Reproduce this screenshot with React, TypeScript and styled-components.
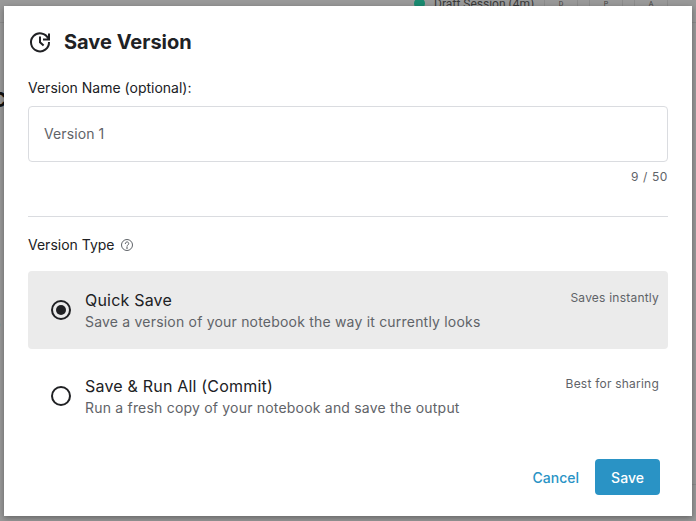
import React from "react";
import styled, { createGlobalStyle } from "styled-components";

const Global = createGlobalStyle`
  html, body { margin: 0; padding: 0; width: 696px; height: 521px; overflow: hidden; background: #999; }
  * { box-sizing: border-box; }
  body { font-family: Inter, "Liberation Sans", sans-serif; -webkit-font-smoothing: antialiased; }
`;

const Page = styled.div`
  position: relative;
  width: 696px;
  height: 521px;
  background: #999;
  overflow: hidden;
`;

const TopBar = styled.div`
  position: absolute;
  left: 0;
  right: 0;
  top: -6px;
  height: 29px;
  border-bottom: 1px solid #8c8c8c;
  display: flex;
  align-items: stretch;
  padding-left: 414px;
  color: #3a3a3a;
  font: 12px Roboto, sans-serif;
`;

const StatusDot = styled.span`
  width: 11px;
  height: 11px;
  border-radius: 50%;
  background: #1a8a70;
  margin: 4px 9px 0 0;
`;

const DraftLabel = styled.span`
  width: 110px;
  padding-top: 3px;
  white-space: nowrap;
`;

const Tick = styled.span`
  width: 34px;
  margin-right: 11px;
  border-left: 1px solid #8c8c8c;
  border-right: 1px solid #8c8c8c;
  font-size: 7px;
  line-height: 10px;
  padding-top: 5px;
  color: #444;
  text-align: center;
`;

const StrayLetter = styled.span<{ $top: number; $size: number }>`
  position: absolute;
  left: -8px;
  top: ${(p) => p.$top}px;
  font: 700 ${(p) => p.$size}px/1 Inter, sans-serif;
  color: #111;
`;

const BottomLine = styled.span`
  position: absolute;
  right: 0;
  top: 484px;
  width: 4px;
  height: 1px;
  background: #8c8c8c;
`;

const Modal = styled.div`
  position: absolute;
  left: 4px;
  top: 6px;
  width: 688px;
  height: 510px;
  background: #fff;
  box-shadow: 0 2px 6px rgba(0, 0, 0, 0.35);
  padding: 0 24px;
  display: flex;
  flex-direction: column;
  color: #202124;
`;

const Header = styled.div`
  display: flex;
  align-items: center;
  gap: 12px;
  height: 24px;
  margin-top: 24px;
  color: #202124;
`;

const Title = styled.h2`
  margin: 0;
  font: 700 20px/24px Inter, sans-serif;
  letter-spacing: 0;
`;

const FieldLabel = styled.label`
  display: block;
  margin-top: 25px;
  font: 400 14px/17px Inter, sans-serif;
  color: #202124;
`;

const NameInput = styled.div`
  margin-top: 10px;
  height: 56px;
  border: 1px solid #dadce0;
  border-radius: 4px;
  padding: 0 15px 1px;
  display: flex;
  align-items: center;
  font: 400 14px Inter, sans-serif;
  letter-spacing: 0.1px;
  color: #5f6368;
`;

const Counter = styled.div`
  margin-top: 8px;
  text-align: right;
  font: 400 12px/14px Inter, sans-serif;
  letter-spacing: 0.6px;
  color: #5f6368;
`;

const Divider = styled.hr`
  margin: 32px 0 0;
  border: 0;
  border-top: 1px solid #dadce0;
`;

const TypeHeading = styled.div`
  margin-top: 19px;
  display: flex;
  align-items: center;
  gap: 5px;
  font: 400 14px/17px Inter, sans-serif;
`;

const Options = styled.div`
  margin-top: 18px;
  display: flex;
  flex-direction: column;
  gap: 8px;
`;

const Option = styled.div<{ $selected?: boolean }>`
  height: 78px;
  border-radius: 4px;
  background: ${(p) => (p.$selected ? "#ebebeb" : "transparent")};
  padding: 0 9px 0 23px;
  display: flex;
  align-items: center;
  gap: 14px;
`;

const Radio = styled.span<{ $selected?: boolean }>`
  width: 20px;
  height: 20px;
  border-radius: 50%;
  border: 2px solid #202124;
  display: flex;
  align-items: center;
  justify-content: center;
  flex: none;
  &::after {
    content: "";
    display: ${(p) => (p.$selected ? "block" : "none")};
    width: 10px;
    height: 10px;
    border-radius: 50%;
    background: #202124;
  }
`;

const OptionBody = styled.div`
  flex: 1;
  min-width: 0;
`;

const OptionTitleRow = styled.div`
  display: flex;
  justify-content: space-between;
  align-items: baseline;
`;

const OptionTitle = styled.div`
  font: 400 16px/20px Inter, sans-serif;
  letter-spacing: 0.2px;
  color: #202124;
`;

const OptionNote = styled.div`
  font: 400 12px/14px Inter, sans-serif;
  letter-spacing: 0.22px;
  color: #5f6368;
  position: relative;
  top: -4px;
`;

const OptionDesc = styled.div`
  margin-top: 3px;
  font: 400 14px/17px Inter, sans-serif;
  letter-spacing: 0.2px;
  color: #5f6368;
`;

const Footer = styled.div`
  display: flex;
  justify-content: flex-end;
  align-items: center;
  gap: 16px;
  margin-top: 24px;
  padding-right: 8px;
`;

const TextButton = styled.button`
  border: 0;
  background: none;
  padding: 0;
  font: 500 14px Inter, sans-serif;
  color: #2a93c5;
`;

const PrimaryButton = styled.button`
  width: 65px;
  height: 36px;
  border: 0;
  border-radius: 4px;
  background: #2a93c5;
  color: #fff;
  font: 500 14px Inter, sans-serif;
`;

const HistoryIcon = () => (
  <svg width="24" height="24" viewBox="0 0 24 24" fill="none" stroke="#202124" strokeWidth="2">
    <path d="M21 3.5V9.5H15" />
    <path d="M20.2 8.6A9 9 0 1 0 21 12" />
    <path d="M12 6.5V12.3L15.6 15.4" />
  </svg>
);

const HelpIcon = () => (
  <svg width="14" height="14" viewBox="0 0 14 14" fill="none" stroke="#5f6368" strokeWidth="1">
    <circle cx="7" cy="7" r="5.5" />
    <path d="M5.3 5.6a1.7 1.7 0 1 1 2.6 1.4c-.6.4-.9.7-.9 1.3" strokeLinecap="round" />
    <circle cx="7" cy="10" r=".4" fill="#5f6368" />
  </svg>
);

export default function App() {
  return (
    <>
      <Global />
      <Page>
        <TopBar>
          <StatusDot />
          <DraftLabel>Draft Session (4m)</DraftLabel>
          <Tick>D</Tick>
          <Tick>P</Tick>
          <Tick>A</Tick>
        </TopBar>
        <StrayLetter $top={90} $size={20}>C</StrayLetter>
        <StrayLetter $top={318} $size={13}>p</StrayLetter>
        <BottomLine />
        <Modal>
          <Header>
            <HistoryIcon />
            <Title>Save Version</Title>
          </Header>
          <FieldLabel>Version Name (optional):</FieldLabel>
          <NameInput>Version 1</NameInput>
          <Counter>9 / 50</Counter>
          <Divider />
          <TypeHeading>
            Version Type <HelpIcon />
          </TypeHeading>
          <Options>
            <Option $selected>
              <Radio $selected />
              <OptionBody>
                <OptionTitleRow>
                  <OptionTitle>Quick Save</OptionTitle>
                  <OptionNote>Saves instantly</OptionNote>
                </OptionTitleRow>
                <OptionDesc>Save a version of your notebook the way it currently looks</OptionDesc>
              </OptionBody>
            </Option>
            <Option>
              <Radio />
              <OptionBody>
                <OptionTitleRow>
                  <OptionTitle>Save &amp; Run All (Commit)</OptionTitle>
                  <OptionNote>Best for sharing</OptionNote>
                </OptionTitleRow>
                <OptionDesc>Run a fresh copy of your notebook and save the output</OptionDesc>
              </OptionBody>
            </Option>
          </Options>
          <Footer>
            <TextButton>Cancel</TextButton>
            <PrimaryButton>Save</PrimaryButton>
          </Footer>
        </Modal>
      </Page>
    </>
  );
}
